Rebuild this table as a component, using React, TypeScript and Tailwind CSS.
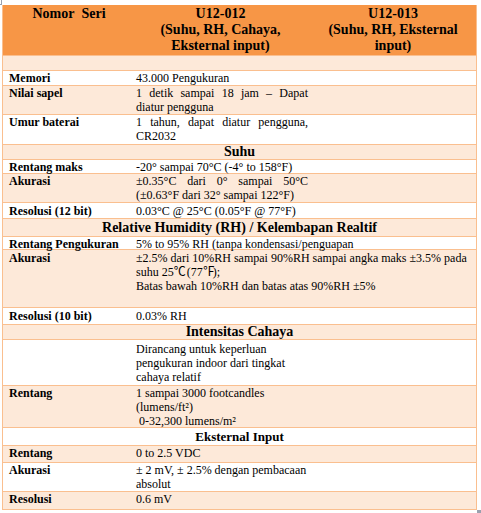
const LIGHT = "bg-[#FDE9D9]";
const WHITE = "bg-white";

type Row =
  | { kind: "section"; title: string; bg: string; h: string; text: string }
  | {
      kind: "data";
      label: string;
      bg: string;
      h: string;
      lines: React.ReactNode[];
      justify?: boolean;
      span?: boolean;
      pad?: string;
    };

// narrow the full-width ℃ / ℉ glyphs so the line keeps its width
const Deg = ({ c }: { c: string }) => <span className="tracking-[-2px]">{c}</span>;

const rows: Row[] = [
  { kind: "data", label: "Memori", bg: WHITE, h: "h-[15px]", lines: ["43.000 Pengukuran"] },
  { kind: "data", label: "Nilai sapel", bg: LIGHT, h: "h-[29px]", lines: ["1 detik sampai 18 jam – Dapat", "diatur pengguna"], justify: true },
  { kind: "data", label: "Umur baterai", bg: WHITE, h: "h-[30px]", lines: ["1 tahun, dapat diatur pengguna,", "CR2032"], justify: true },
  { kind: "section", title: "Suhu", bg: LIGHT, h: "h-[15px]", text: "text-[14px] leading-[14px]" },
  { kind: "data", label: "Rentang maks", bg: WHITE, h: "h-[14px]", lines: ["-20° sampai 70°C (-4° to 158°F)"] },
  { kind: "data", label: "Akurasi", bg: LIGHT, h: "h-[29px]", lines: ["±0.35°C dari 0° sampai 50°C", "(±0.63°F dari 32° sampai 122°F)"], justify: true },
  { kind: "data", label: "Resolusi (12 bit)", bg: WHITE, h: "h-[16px]", lines: ["0.03°C @ 25°C (0.05°F @ 77°F)"], pad: "pt-[1px]" },
  { kind: "section", title: "Relative Humidity (RH) / Kelembapan Realtif", bg: LIGHT, h: "h-[18px]", text: "text-[14px] leading-[17px]" },
  { kind: "data", label: "Rentang Pengukuran", bg: WHITE, h: "h-[13px]", lines: ["5% to 95% RH (tanpa kondensasi/penguapan"], span: true },
  {
    kind: "data",
    label: "Akurasi",
    bg: LIGHT,
    h: "h-[58px]",
    lines: [
      "±2.5% dari 10%RH sampai 90%RH sampai angka maks ±3.5% pada",
      <>
        suhu 25<Deg c="℃" />&nbsp;(77<Deg c="℉" />);
      </>,
      "Batas bawah 10%RH dan batas atas 90%RH ±5%",
    ],
    span: true,
    pad: "pt-[1px]",
  },
  { kind: "data", label: "Resolusi (10 bit)", bg: WHITE, h: "h-[17px]", lines: ["0.03% RH"], pad: "pt-[1px]" },
  { kind: "section", title: "Intensitas Cahaya", bg: LIGHT, h: "h-[15px]", text: "text-[14px] leading-[14px]" },
  {
    kind: "data",
    label: "",
    bg: WHITE,
    h: "h-[46px]",
    lines: ["Dirancang untuk keperluan", "pengukuran indoor dari tingkat", "cahaya relatif"],
    pad: "pt-[2px] leading-[14.5px]",
  },
  { kind: "data", label: "Rentang", bg: LIGHT, h: "h-[42px]", lines: ["1 sampai 3000 footcandles", "(lumens/ft²)", "\u00a00-32,300 lumens/m²"] },
  { kind: "section", title: "Eksternal Input", bg: WHITE, h: "h-[18px]", text: "text-[13px] leading-[17px]" },
  { kind: "data", label: "Rentang", bg: LIGHT, h: "h-[17px]", lines: ["0 to 2.5 VDC"] },
  { kind: "data", label: "Akurasi", bg: WHITE, h: "h-[29px]", lines: ["± 2 mV, ± 2.5% dengan pembacaan", "absolut"] },
  { kind: "data", label: "Resolusi", bg: LIGHT, h: "h-[18px]", lines: ["0.6 mV"] },
];

function Lines({ lines, justify }: { lines: React.ReactNode[]; justify?: boolean }) {
  return (
    <>
      {lines.map((l, i) => {
        const last = i === lines.length - 1;
        return (
          <span key={i} className={justify && !last ? "block text-justify [text-align-last:justify]" : "block"}>
            {l}
          </span>
        );
      })}
    </>
  );
}

export default function App() {
  return (
    <div
      className="relative w-[481px] h-[513px] bg-white pt-[5px] pl-[2px] text-black"
      style={{ fontFamily: '"Liberation Serif", "Times New Roman", "Noto Sans CJK SC", serif' }}
    >
      <div className="absolute left-0 top-0 w-[2px] h-[5px] border-r border-b border-gray-400" />
      <div className="absolute left-[477px] top-[510px] w-[4px] h-[3px] bg-gray-400" />

      <div className="w-[475px] border-x border-[#FABF8F]">
        {/* header */}
        <div className="grid grid-cols-[128px_179px_166px] h-[51px] bg-[#F79646] border-b border-[#FABF8F] font-bold text-[14px] leading-[16px] text-center pt-[1px]">
          <div className="pl-[4px]">Nomor&nbsp; Seri</div>
          <div>
            U12-012
            <br />
            (Suhu, RH, Cahaya,
            <br />
            Eksternal input)
          </div>
          <div>
            U12-013
            <br />
            (Suhu, RH, Eksternal
            <br />
            input)
          </div>
        </div>
        <div className={`${LIGHT} h-[15px] border-b border-[#FABF8F]`} />

        {rows.map((r, i) =>
          r.kind === "section" ? (
            <div key={i} className={`${r.bg} ${r.h} border-b border-[#FABF8F] text-center font-bold ${r.text}`}>
              {r.title}
            </div>
          ) : (
            <div
              key={i}
              className={`${r.bg} ${r.h} border-b border-[#FABF8F] grid grid-cols-[128px_179px_166px] text-[12px] leading-[14px] whitespace-nowrap ${r.pad ?? ""}`}
            >
              <div className="font-bold pl-[6px]">{r.label}</div>
              {r.span ? (
                <div className="col-span-2 pl-[5px]">
                  <Lines lines={r.lines} />
                </div>
              ) : (
                <>
                  <div className="pl-[5px] pr-[2px]">
                    <Lines lines={r.lines} justify={r.justify} />
                  </div>
                  <div />
                </>
              )}
            </div>
          )
        )}
      </div>
    </div>
  );
}
